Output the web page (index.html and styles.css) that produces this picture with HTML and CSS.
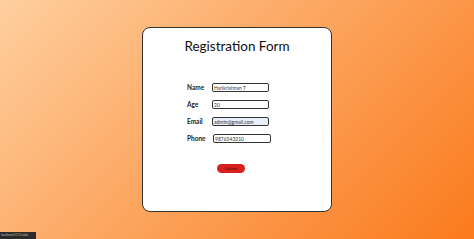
FILE: index.html
```html
<!doctype html>
<html lang="en">
  <head>
    <meta charset="UTF-8" />
    <meta name="viewport" content="width=device-width, initial-scale=1.0" />
    <title>Registration Form</title>
    <link rel="stylesheet" href="styles.css">
  </head>
  <body>
    <div class="card">
      <h1>Registration Form</h1>
      <form class="reg-form">
        <div class="row">
          <label for="name">Name</label>
          <input id="name" type="text" value="Harikrishnan T">
        </div>
        <div class="row">
          <label for="age">Age</label>
          <input id="age" type="text" value="20">
        </div>
        <div class="row">
          <label for="email">Email</label>
          <input id="email" class="autofill" type="text" value="admin@gmail.com">
        </div>
        <div class="row">
          <label for="phone">Phone</label>
          <input id="phone" class="wide" type="text" value="9876543210">
        </div>
        <button type="button" class="submit">Submit</button>
      </form>
    </div>
    <div class="status">localhost:5173/table</div>
  </body>
</html>
```

FILE: styles.css
```css
body {
  margin: 0;
  min-height: 100vh;
  display: flex;
  align-items: center;
  justify-content: center;
  font-family: Lato, "Open Sans", sans-serif;
  background: linear-gradient(135deg, #fecf9f 0%, #fca35c 50%, #fb7a1c 100%);
}
.card {
  box-sizing: border-box;
  width: 190px;
  height: 185px;
  background: white;
  border: 1px solid #333;
  border-radius: 8px;
}
.card h1 {
  margin: 9px 0 0;
  font-size: 13.5px;
  line-height: 18px;
  font-weight: 400;
  text-align: center;
  color: #111;
}
.reg-form {
  margin: 28px 0 0 44px;
  display: flex;
  flex-direction: column;
  gap: 8px;
}
.row {
  display: flex;
  align-items: center;
  height: 9px;
}
.row label {
  width: 25px;
  font-size: 6.5px;
  font-weight: 700;
  color: #222;
}
.row input {
  box-sizing: border-box;
  width: 57px;
  height: 9px;
  margin: 0;
  padding: 0 1px;
  border: 1px solid #333;
  border-radius: 2px;
  font-family: inherit;
  font-size: 5px;
  color: #333;
  background: white;
}
.row input.autofill {
  background: #e8f0fe;
}
.row input.wide {
  width: 58px;
  margin-left: 1px;
}
.submit {
  align-self: flex-start;
  margin: 13px 0 0 30px;
  width: 28px;
  height: 9px;
  padding: 0;
  border: none;
  border-radius: 5px;
  background: #d7211f;
  color: #5a0a0a;
  font-family: inherit;
  font-size: 4px;
}
.status {
  position: fixed;
  left: 0;
  bottom: 0;
  width: 35px;
  height: 7px;
  background: #2b2b2b;
  color: #bbb;
  font-size: 3px;
  line-height: 7px;
  padding-left: 1px;
  overflow: hidden;
  white-space: nowrap;
}
```
